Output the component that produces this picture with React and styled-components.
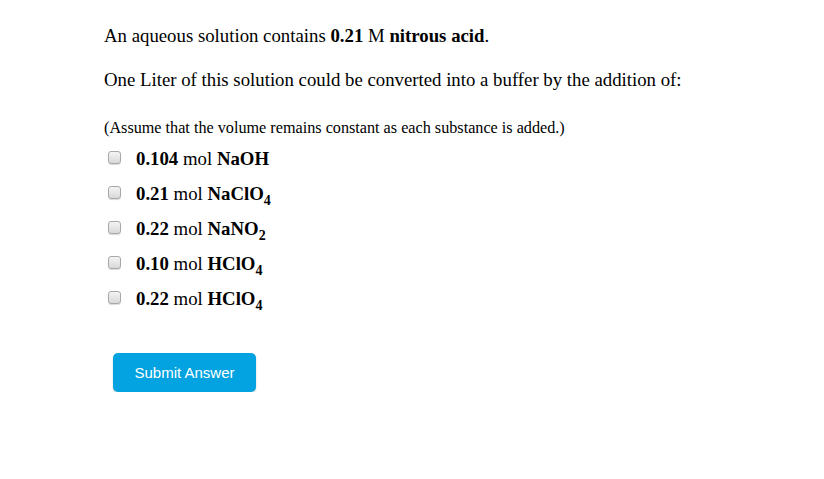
import React from "react";
import styled, { createGlobalStyle } from "styled-components";

const Global = createGlobalStyle`
  body {
    margin: 0;
    background: #fff;
    font-family: "Liberation Serif", "Times New Roman", serif;
    color: #000;
  }
`;

const Page = styled.div`
  padding: 24px 0 0 104px;
`;

const Para = styled.p`
  margin: 0 0 ${(p) => p.$gap || 0}px;
  font-size: ${(p) => p.$size || 18.8}px;
  line-height: ${(p) => p.$lh || 24}px;
`;

const Options = styled.div`
  display: flex;
  flex-direction: column;
  gap: 11px;
  margin-top: 9px;
`;

const Option = styled.label`
  display: flex;
  align-items: center;
  gap: 15px;
  padding-left: 4px;
  font-size: 18.8px;
  line-height: 24px;
`;

const Box = styled.span`
  width: 13px;
  height: 13px;
  box-sizing: border-box;
  border: 1px solid #a8a8a8;
  border-radius: 3px;
  background: linear-gradient(#f4f4f4, #d8d8d8);
  box-shadow: 0 1px 1px rgba(0, 0, 0, 0.15);
  margin-top: -4px;
`;

const Sub = styled.sub`
  font-size: 14px;
  line-height: 0;
  vertical-align: -5px;
`;

const Button = styled.button`
  margin: 42px 0 0 9px;
  width: 143px;
  height: 39px;
  border: none;
  border-radius: 5px;
  background: #02a3e0;
  color: #fff;
  font-family: "Liberation Sans", Arial, sans-serif;
  font-size: 15px;
  box-shadow: 0 1px 2px rgba(0, 0, 0, 0.2);
`;

const items = [
  ["0.104", <b>NaOH</b>],
  ["0.21", <b>NaClO<Sub>4</Sub></b>],
  ["0.22", <b>NaNO<Sub>2</Sub></b>],
  ["0.10", <b>HClO<Sub>4</Sub></b>],
  ["0.22", <b>HClO<Sub>4</Sub></b>],
];

export default function App() {
  return (
    <Page>
      <Global />
      <Para $gap={20}>
        An aqueous solution contains <b>0.21</b> M <b>nitrous acid</b>.
      </Para>
      <Para $gap={26}>
        One Liter of this solution could be converted into a buffer by the addition of:
      </Para>
      <Para $size={16.2} $lh={20}>
        (Assume that the volume remains constant as each substance is added.)
      </Para>
      <Options>
        {items.map(([n, f], i) => (
          <Option key={i}>
            <Box />
            <span>
              <b>{n}</b> mol {f}
            </span>
          </Option>
        ))}
      </Options>
      <Button>Submit Answer</Button>
    </Page>
  );
}
